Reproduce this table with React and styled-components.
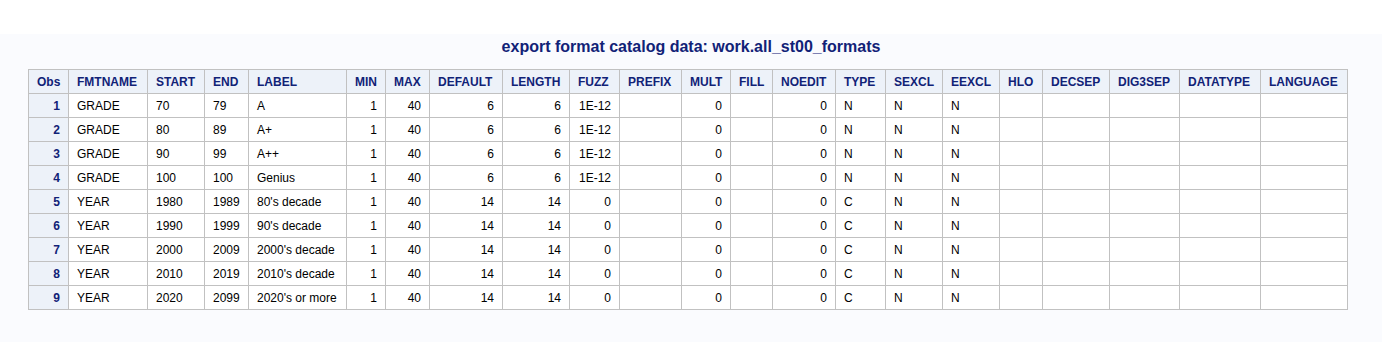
import React from "react";
import styled, { createGlobalStyle } from "styled-components";

const GlobalStyle = createGlobalStyle`
  html, body {
    margin: 0;
    padding: 0;
    background: #ffffff;
  }
  body {
    font-family: "Liberation Sans", Arial, sans-serif;
  }
`;

const Page = styled.div`
  padding-top: 34px;
  background: #ffffff;
  min-height: 362px;
  box-sizing: border-box;
`;

const Band = styled.section`
  background: #fafbfe;
  padding: 4px 0 32px 28px;
`;

const Title = styled.h1`
  margin: 0 0 13px;
  font-family: "Liberation Sans", Arial, sans-serif;
  font-size: 16px;
  line-height: 18px;
  font-weight: bold;
  color: #112277;
  text-align: center;
  padding-right: 28px;
`;

const Table = styled.table`
  table-layout: fixed;
  width: 1319px;
  border-collapse: collapse;
  border-spacing: 0;
  border: 1px solid #c1c1c1;
  font-family: "Liberation Sans", Arial, sans-serif;
  font-size: 12px;
`;

const Col = styled.col`
  width: ${(p) => p.$w}px;
`;

const HeadCell = styled.th`
  height: 23px;
  padding: 0 8px;
  border: 1px solid #c1c1c1;
  background: #edf2f9;
  color: #112277;
  font-weight: bold;
  text-align: left;
  white-space: nowrap;
  overflow: hidden;
  vertical-align: middle;
`;

const RowHead = styled.th`
  height: 23px;
  padding: 0 8px;
  border: 1px solid #c1c1c1;
  background: #edf2f9;
  color: #112277;
  font-weight: bold;
  text-align: right;
  vertical-align: middle;
`;

const Cell = styled.td`
  height: 23px;
  padding: 0 8px;
  border: 1px solid #c1c1c1;
  background: #ffffff;
  color: #000000;
  text-align: ${(p) => (p.$num ? "right" : "left")};
  white-space: nowrap;
  overflow: hidden;
  vertical-align: middle;
`;

const columns = [
  { name: "Obs", w: 40, num: true },
  { name: "FMTNAME", w: 79 },
  { name: "START", w: 57 },
  { name: "END", w: 44 },
  { name: "LABEL", w: 98 },
  { name: "MIN", w: 39, num: true },
  { name: "MAX", w: 44, num: true },
  { name: "DEFAULT", w: 73, num: true },
  { name: "LENGTH", w: 67, num: true },
  { name: "FUZZ", w: 50, num: true },
  { name: "PREFIX", w: 62 },
  { name: "MULT", w: 49, num: true },
  { name: "FILL", w: 42 },
  { name: "NOEDIT", w: 63, num: true },
  { name: "TYPE", w: 50 },
  { name: "SEXCL", w: 57 },
  { name: "EEXCL", w: 57 },
  { name: "HLO", w: 43 },
  { name: "DECSEP", w: 67 },
  { name: "DIG3SEP", w: 70 },
  { name: "DATATYPE", w: 81 },
  { name: "LANGUAGE", w: 87 },
];

const grade = (start, end, label) => [
  "GRADE", start, end, label, "1", "40", "6", "6", "1E-12", "", "0", "", "0", "N", "N", "N", "", "", "", "", "",
];
const year = (start, end, label) => [
  "YEAR", start, end, label, "1", "40", "14", "14", "0", "", "0", "", "0", "C", "N", "N", "", "", "", "", "",
];

const rows = [
  grade("70", "79", "A"),
  grade("80", "89", "A+"),
  grade("90", "99", "A++"),
  grade("100", "100", "Genius"),
  year("1980", "1989", "80's decade"),
  year("1990", "1999", "90's decade"),
  year("2000", "2009", "2000's decade"),
  year("2010", "2019", "2010's decade"),
  year("2020", "2099", "2020's or more"),
];

export default function App() {
  return (
    <Page>
      <GlobalStyle />
      <Band>
        <Title>export format catalog data: work.all_st00_formats</Title>
        <Table>
          <colgroup>
            {columns.map((c) => (
              <Col key={c.name} $w={c.w} />
            ))}
          </colgroup>
          <thead>
            <tr>
              {columns.map((c) => (
                <HeadCell key={c.name}>{c.name}</HeadCell>
              ))}
            </tr>
          </thead>
          <tbody>
            {rows.map((r, i) => (
              <tr key={i}>
                <RowHead>{i + 1}</RowHead>
                {r.map((v, j) => (
                  <Cell key={j} $num={columns[j + 1].num}>
                    {v}
                  </Cell>
                ))}
              </tr>
            ))}
          </tbody>
        </Table>
      </Band>
    </Page>
  );
}
